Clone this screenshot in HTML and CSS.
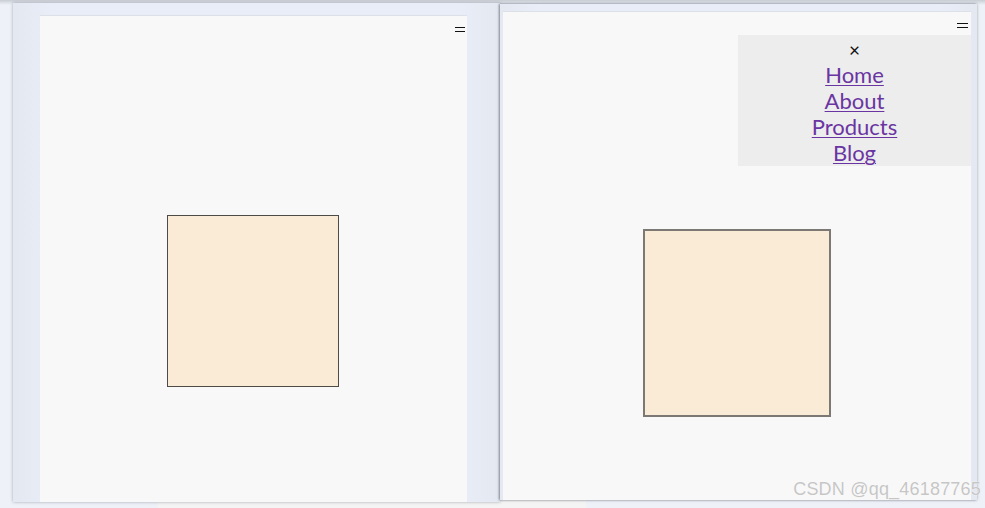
FILE: index.html
```html
<!DOCTYPE html>
<html lang="en">
<head>
<meta charset="utf-8">
<title>Menu demo</title>
<link rel="stylesheet" href="styles.css">
</head>
<body>
<div class="desktop">
  <div class="back-window"></div>

  <div class="window window-left">
    <div class="page">
      <div class="topbar topbar-left">
        <span class="burger"></span>
      </div>
      <div class="box box-left"></div>
    </div>
  </div>

  <div class="window window-right">
    <div class="page">
      <div class="topbar topbar-right">
        <span class="burger burger-lg"></span>
      </div>
      <nav class="menu">
        <span class="close">×</span>
        <a href="#home">Home</a>
        <a href="#about">About</a>
        <a href="#products">Products</a>
        <a href="#blog">Blog</a>
      </nav>
      <div class="box box-right"></div>
    </div>
  </div>

  <div class="watermark">CSDN @qq_46187765</div>
</div>
</body>
</html>
```

FILE: styles.css
```css
* { box-sizing: border-box; }

html, body {
  margin: 0;
  padding: 0;
}

body {
  background: #eef1f8;
  font-family: "Lato", "Noto Sans", sans-serif;
}

.desktop {
  position: relative;
  width: 985px;
  height: 508px;
  overflow: hidden;
  background: linear-gradient(to bottom, #c8ccd3 0, #dfe3ea 3px, #eef1f8 5px);
}

.back-window {
  position: absolute;
  left: 158px;
  top: 470px;
  width: 428px;
  height: 40px;
  background: #f4f4f4;
}

.window {
  position: absolute;
  display: flex;
  flex-direction: column;
  background: linear-gradient(to right, #e4e8f1, #e9edf7 8%, #e9edf7 92%, #e4e8f1);
  box-shadow: 0 0 3px rgba(60, 64, 80, 0.4);
}

.window-left {
  left: 13px;
  top: 3px;
  width: 487px;
  height: 499px;
  padding: 12px 33px 0 27px;
}

.window-right {
  left: 500px;
  top: 4px;
  width: 477px;
  height: 496px;
  padding: 7px 6px 0 3px;
  box-shadow: -1px 0 2px rgba(60, 64, 80, 0.45), 0 0 3px rgba(60, 64, 80, 0.35);
}

.page {
  flex: 1;
  display: flex;
  flex-direction: column;
  background: #f8f8f8;
  border-top: 1px solid #dde0e6;
}

.topbar {
  display: flex;
  justify-content: flex-end;
}

.topbar-left {
  padding: 11px 2px 0 0;
}

.topbar-right {
  padding: 11px 3px 0 0;
}

.burger {
  display: block;
  width: 10px;
  height: 5px;
  border-top: 1px solid #111;
  border-bottom: 1px solid #111;
}

.burger-lg {
  width: 11px;
}

.box {
  align-self: center;
  background: #faebd7;
}

.box-left {
  width: 172px;
  height: 172px;
  margin-top: 183px;
  margin-right: 1px;
  border: 1px solid #4e4a46;
}

.box-right {
  width: 188px;
  height: 188px;
  margin-top: 63px;
  border: 2px solid #7c7874;
}

.menu {
  align-self: flex-end;
  width: 233px;
  margin-top: 7px;
  padding: 1px 0 0;
  display: flex;
  flex-direction: column;
  align-items: center;
  background: #ededed;
}

.menu .close,
.menu a {
  display: block;
  height: 26px;
  line-height: 26px;
}

.menu .close {
  font-size: 19px;
  line-height: 27px;
  color: #111;
}

.menu a {
  font-size: 22px;
  color: #6a35a2;
  text-decoration: underline;
  text-decoration-thickness: 1px;
  text-underline-offset: 2px;
}

.watermark {
  position: absolute;
  right: 4px;
  top: 479px;
  font-family: "Liberation Sans", Arial, sans-serif;
  font-size: 18px;
  letter-spacing: 0.2px;
  color: #c6c6c6;
  text-shadow: 0 0 1px #fff, 0 0 1px #fff;
}
```
